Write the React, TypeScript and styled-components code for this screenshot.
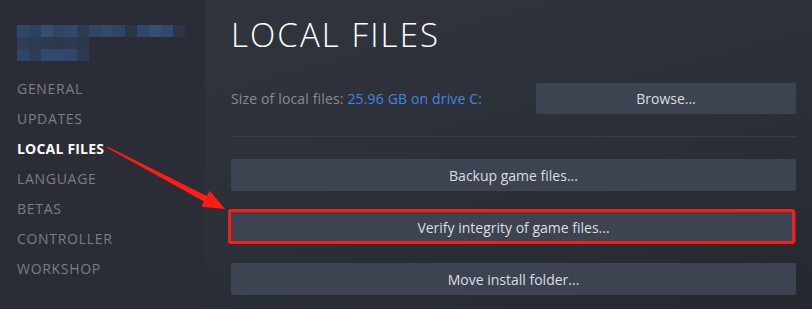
import React from "react";
import styled, { createGlobalStyle } from "styled-components";

const GlobalStyle = createGlobalStyle`
  html, body {
    margin: 0;
    padding: 0;
    background: #2a2d35;
  }
  body {
    font-family: "Open Sans", "Liberation Sans", sans-serif;
  }
`;

const NAV_ITEMS = [
  "GENERAL",
  "UPDATES",
  "LOCAL FILES",
  "LANGUAGE",
  "BETAS",
  "CONTROLLER",
  "WORKSHOP",
];

// pixelated game title, one row per list, 12px cells
const BLUR_ROWS = [
  ["#2f4766", "#2d4260", "#34506f", "#2e4563", "#31496a", "#2c3c53", "#2f4563", "#33496a", "#2f4563", "#2a3548", "#2f4766", "#33506f", "#31496a", "#2b3546"],
  ["#2d3f56", "#2c3c53", "#2b3a50", "#2b394d", "#2b3a50", "#2b3849"],
  ["#2f4766", "#2c3d54", "#31496a", "#31496a", "#30476a", "#2b3a50"],
];

const ACTIONS = [
  { label: "Backup game files...", highlighted: false },
  { label: "Verify integrity of game files...", highlighted: true },
  { label: "Move install folder...", highlighted: false },
];

const App: React.FC = () => {
  return (
    <>
      <GlobalStyle />
      <Page>
        <Sidebar>
          <GameName width={168} height={36} viewBox="0 0 168 36">
            {BLUR_ROWS.map((row, y) =>
              row.map((color, x) => (
                <rect
                  key={`${y}-${x}`}
                  x={x * 12}
                  y={y * 12}
                  width={12}
                  height={12}
                  fill={color}
                />
              ))
            )}
          </GameName>
          <NavList>
            {NAV_ITEMS.map((item) => (
              <NavItem key={item} active={item === "LOCAL FILES"}>
                {item}
              </NavItem>
            ))}
          </NavList>
        </Sidebar>
        <Main>
          <Title>LOCAL FILES</Title>
          <SizeRow>
            <SizeLabel>
              Size of local files: <SizeValue>25.96 GB on drive C:</SizeValue>
            </SizeLabel>
            <BrowseButton>Browse...</BrowseButton>
          </SizeRow>
          <Divider />
          <ActionList>
            {ACTIONS.map((action) => (
              <ActionSlot key={action.label}>
                <ActionButton>{action.label}</ActionButton>
                {action.highlighted && <Highlight />}
              </ActionSlot>
            ))}
          </ActionList>
        </Main>
        <Annotation width={812} height={309} viewBox="0 0 812 309">
          <polygon
            points="107,146.3 206.9,196.1 209.7,190.8 225,209 201.3,206.8 204.1,201.5 107,147.7"
            fill="#ff1c14"
          />
        </Annotation>
      </Page>
    </>
  );
};

const Page = styled.div`
  position: relative;
  display: flex;
  width: 812px;
  height: 309px;
  overflow: hidden;
`;

const Sidebar = styled.div`
  display: flex;
  flex-direction: column;
  width: 205px;
  padding: 25px 0 0 17px;
  box-sizing: border-box;
  background: #2a2d35;
`;

const GameName = styled.svg`
  display: block;
  shape-rendering: crispEdges;
`;

const NavList = styled.div`
  display: flex;
  flex-direction: column;
  margin-top: 13px;
`;

const NavItem = styled.div<{ active?: boolean }>`
  height: 30px;
  line-height: 30px;
  font-size: 14px;
  letter-spacing: ${({ active }) => (active ? "0.2px" : "0.7px")};
  color: ${({ active }) => (active ? "#ffffff" : "#7b7e84")};
  font-weight: ${({ active }) => (active ? 700 : 400)};
`;

const Main = styled.div`
  flex: 1;
  display: flex;
  flex-direction: column;
  padding: 15px 16px 0 26px;
  background: linear-gradient(165deg, #30343d 0%, #2b2f37 55%, #25282f 100%);
`;

const Title = styled.div`
  height: 40px;
  line-height: 40px;
  font-size: 33px;
  font-weight: 300;
  letter-spacing: 2.1px;
  color: #ffffff;
`;

const SizeRow = styled.div`
  display: flex;
  align-items: center;
  justify-content: space-between;
  margin-top: 28px;
`;

const SizeLabel = styled.div`
  font-size: 14px;
  letter-spacing: 0.15px;
  color: #878a90;
`;

const SizeValue = styled.span`
  color: #3d87e6;
`;

const BaseButton = styled.div`
  display: flex;
  align-items: center;
  justify-content: center;
  height: 32px;
  border-radius: 2px;
  background: #3d4350;
  color: #dcdee1;
  font-size: 14px;
`;

const BrowseButton = styled(BaseButton)`
  width: 260px;
  height: 31px;
`;

const Divider = styled.div`
  height: 1px;
  margin-top: 22px;
  background: #383c45;
`;

const ActionList = styled.div`
  display: flex;
  flex-direction: column;
  gap: 20px;
  margin-top: 22px;
`;

const ActionSlot = styled.div`
  position: relative;
`;

const ActionButton = styled(BaseButton)``;

const Highlight = styled.div`
  position: absolute;
  top: -2px;
  left: -3px;
  right: 1px;
  bottom: -1px;
  border: 3px solid #ff1c14;
  border-radius: 3px;
  pointer-events: none;
`;

const Annotation = styled.svg`
  position: absolute;
  top: 0;
  left: 0;
  pointer-events: none;
`;

export default App;
